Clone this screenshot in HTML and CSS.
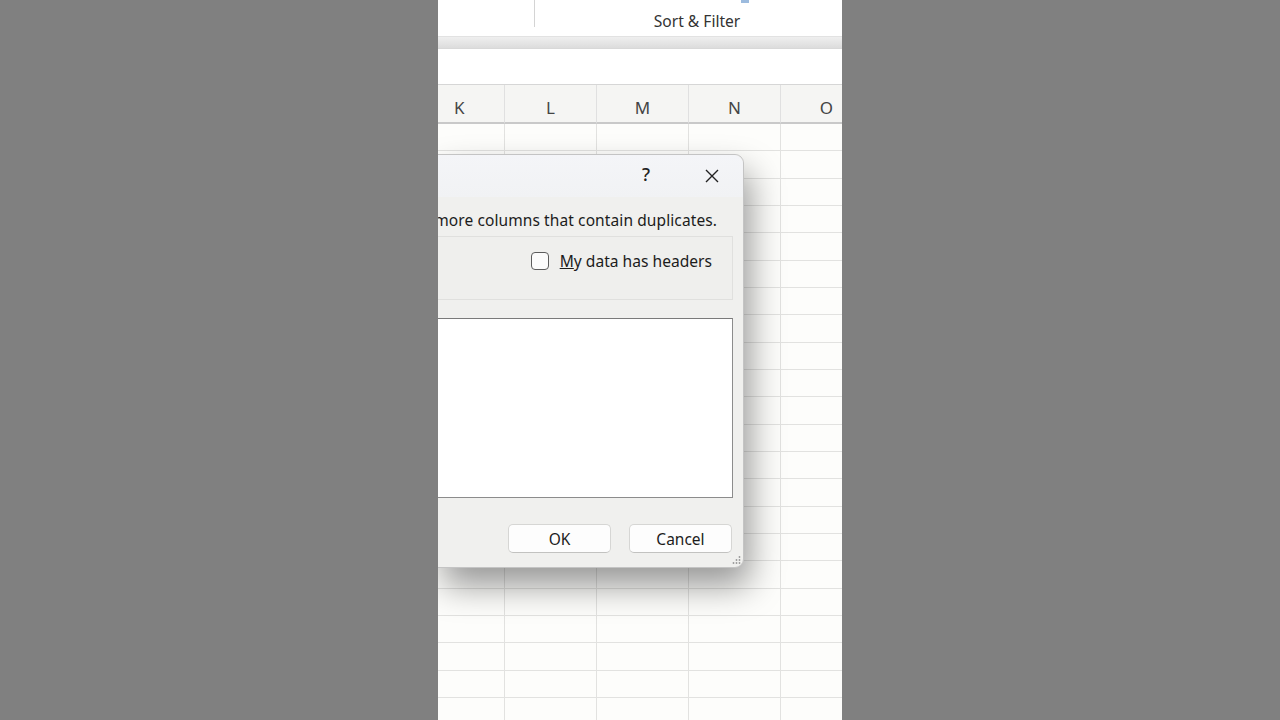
FILE: index.html
```html
<!DOCTYPE html>
<html lang="en">
<head>
  <meta charset="UTF-8">
  <meta name="viewport" content="width=device-width, initial-scale=1.0">
  <title>Remove Duplicates</title>
  <link rel="stylesheet" href="styles.css">
</head>
<body>

  <div class="phone-strip">
    <!-- ribbon -->
    <div class="ribbon">
      <div class="ribbon-divider"></div>
      <div class="ribbon-group">
        <span class="ribbon-icon"></span>
        <span class="ribbon-label">Sort &amp; Filter</span>
      </div>
    </div>
    <div class="ribbon-edge"></div>
    <div class="formula-bar"></div>

    <!-- sheet -->
    <div class="sheet">
      <div class="col-head">K</div>
      <div class="col-head">L</div>
      <div class="col-head">M</div>
      <div class="col-head">N</div>
      <div class="col-head">O</div>
    </div>
    <div class="sheet cells" id="cells"></div>

    <!-- dialog -->
    <div class="dialog">
      <div class="dialog-title">
        <span class="title-btn help">?</span>
        <span class="title-btn close">
          <svg width="16" height="16" viewBox="0 0 16 16"><path d="M2 2 L14 14 M14 2 L2 14" stroke="#222" stroke-width="1.4" fill="none"/></svg>
        </span>
      </div>
      <div class="dialog-body">
        <p class="intro"><span>more columns that contain duplicates.</span></p>
        <div class="options">
          <label class="check">
            <span class="box"></span>
            <span><u>M</u>y data has headers</span>
          </label>
        </div>
        <div class="column-list"></div>
        <div class="actions">
          <button class="btn">OK</button>
          <button class="btn">Cancel</button>
        </div>
      </div>
      <svg class="grip" width="10" height="10" viewBox="0 0 10 10">
        <circle cx="8.5" cy="2" r="0.9" fill="#999"/>
        <circle cx="5.5" cy="5" r="0.9" fill="#999"/>
        <circle cx="8.5" cy="5" r="0.9" fill="#999"/>
        <circle cx="2.5" cy="8" r="0.9" fill="#999"/>
        <circle cx="5.5" cy="8" r="0.9" fill="#999"/>
        <circle cx="8.5" cy="8" r="0.9" fill="#999"/>
      </svg>
    </div>
  </div>

  <script>
    // fill the empty grid
    const cells = document.getElementById('cells');
    for (let i = 0; i < 22 * 5; i++) {
      const cell = document.createElement('div');
      cell.className = 'cell';
      cells.appendChild(cell);
    }
  </script>

</body>
</html>
```

FILE: styles.css
```css
body {
  margin: 0;
  background-color: #808080;
  display: flex;
  justify-content: center;
  height: 720px;
  overflow: hidden;
  font-family: 'Noto Sans', 'Open Sans', sans-serif;
}

.phone-strip {
  position: relative;
  width: 404px;
  height: 720px;
  background-color: #fdfdfb;
  overflow: hidden;
}

.ribbon {
  height: 36px;
  background-color: #fff;
  display: flex;
}

.ribbon-divider {
  width: 1px;
  height: 27px;
  margin-left: 96px;
  background-color: #d4d4d4;
}

.ribbon-group {
  width: 160px;
  margin-left: 82px;
  display: flex;
  flex-direction: column;
  align-items: center;
}

.ribbon-icon {
  width: 8px;
  height: 3px;
  margin-left: 96px;
  background-color: #5a8ec8;
  opacity: 0.6;
}

.ribbon-label {
  font-size: 15.6px;
  color: #333;
  line-height: 20px;
  margin-top: 8px;
}

.ribbon-edge {
  height: 11px;
  background: linear-gradient(#efefef, #dcdcdc);
  border-top: 1px solid #e2e2e2;
}

.formula-bar {
  height: 35px;
  background-color: #fff;
  border-top: 1px solid #d8d8d8;
  border-bottom: 1px solid #d6d6d6;
}

.sheet {
  display: grid;
  grid-template-columns: 67px 92px 92px 92px 92px;
}

.col-head {
  background-color: #f5f5f3;
  border-right: 1px solid #e0e0e0;
  border-bottom: 2px solid #c9c9c9;
  box-sizing: border-box;
  height: 39px;
  display: flex;
  align-items: center;
  justify-content: center;
  font-size: 17px;
  color: #444;
  padding-top: 8px;
}

.col-head:first-child {
  justify-content: flex-start;
  padding-left: 16px;
}

.cells {
  grid-auto-rows: 27.33px;
}

.cell {
  box-sizing: border-box;
  border-right: 1px solid #e2e2e0;
  border-bottom: 1px solid #e2e2e0;
}

/* dialog */
.dialog {
  position: absolute;
  left: -1px;
  top: 154px;
  width: 307px;
  height: 414px;
  box-sizing: border-box;
  background-color: #f0f0ee;
  border: 1px solid #c4c4c4;
  border-radius: 0 9px 9px 0;
  box-shadow: 6px 18px 34px rgba(0, 0, 0, 0.4);
  color: #1c1c1c;
}

.dialog-title {
  height: 42px;
  background: linear-gradient(#f4f5f8, #f1f2f4);
  border-radius: 0 9px 0 0;
  display: flex;
  align-items: center;
  justify-content: flex-end;
  padding-right: 23px;
}

.title-btn {
  display: flex;
  align-items: center;
  justify-content: center;
}

.help {
  font-size: 18px;
  font-weight: 500;
  margin-right: 54px;
  color: #222;
  margin-top: -5px;
}

.dialog-body {
  padding-right: 10px;
  overflow: hidden;
}

.intro {
  margin: 13px 0 0;
  font-size: 15.5px;
  letter-spacing: 0.1px;
  line-height: 20px;
  display: flex;
  justify-content: flex-end;
  padding-right: 16px;
  white-space: nowrap;
}

.options {
  margin-top: 6px;
  height: 62px;
  border: 1px solid #e0e0de;
  border-left: none;
  background-color: #efefed;
  display: flex;
  align-items: flex-start;
  justify-content: flex-end;
  padding-right: 20px;
}

.check {
  display: flex;
  align-items: center;
  gap: 11px;
  font-size: 15.6px;
  margin-top: 13px;
}

.box {
  width: 18px;
  height: 18px;
  box-sizing: border-box;
  border: 1.5px solid #5c5c5c;
  border-radius: 4px;
  background-color: #fbfbfb;
}

.column-list {
  margin-top: 18px;
  height: 180px;
  box-sizing: border-box;
  background-color: #fff;
  border: 1px solid #8c8c8c;
  border-left: none;
  border-top-color: #7a7a7a;
}

.actions {
  display: flex;
  justify-content: flex-end;
  gap: 18px;
  margin-top: 26px;
  padding-right: 1px;
}

.btn {
  width: 103px;
  height: 29px;
  font-family: 'Noto Sans', 'Open Sans', sans-serif;
  font-size: 15.5px;
  color: #1c1c1c;
  background-color: #fdfdfd;
  border: 1px solid #d6d6d4;
  border-bottom-color: #c2c2c0;
  border-radius: 5px;
  padding: 0;
}

.grip {
  position: absolute;
  right: 2px;
  bottom: 2px;
}
```
